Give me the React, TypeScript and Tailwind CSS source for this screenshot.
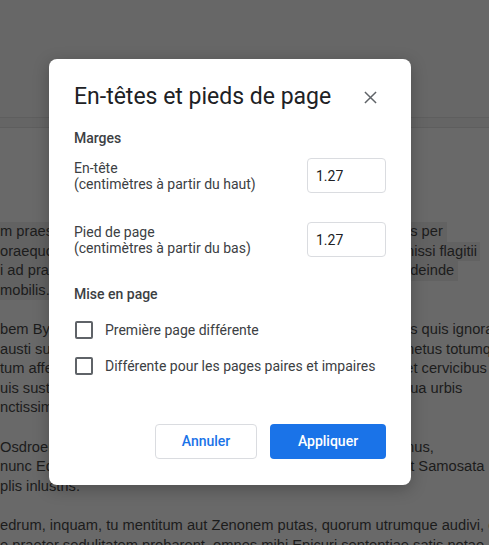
import React from 'react';

interface DocLine {
  left: string;
  right: string;
  hl?: string;
}

const lines: DocLine[] = [
  { left: 'm praesentium nostri temporis', right: 'es per', hl: 'w-[447px]' },
  { left: 'oraequo animo videntur', right: 'missi flagitii', hl: 'w-[480px]' },
  { left: 'i ad praetorium venire', right: 'adeinde', hl: 'w-[458px]' },
  { left: 'mobilis.', right: '', hl: 'w-[50px]' },
  { left: '', right: '' },
  { left: 'bem Byzantium contendit', right: 'ris quis ignorat' },
  { left: 'austi suri temporis', right: 'metus totumque' },
  { left: 'tum affectus animo', right: 'iet cervicibus' },
  { left: 'uis sustinere potuit', right: 'qua urbis' },
  { left: 'nctissimae urbis', right: '' },
  { left: '', right: '' },
  { left: ' Osdroenae regionis', right: 'mus,' },
  { left: ' nunc Edessam', right: 'et Samosata' },
  { left: 'plis inlustris.', right: '' },
  { left: '', right: '' },
  { left: 'edrum, inquam, tu mentitum aut Zenonem putas, quorum utrumque audivi, cum', right: '' },
  { left: 'e praeter sedulitatem probarent, omnes mihi Epicuri sententiae satis notae', right: '' },
];

const Checkbox = ({ label }: { label: string }) => (
  <label className="flex h-6 items-center">
    <span className="ml-[1px] h-[18px] w-[18px] rounded-[2px] border-2 border-[#5f6368]" />
    <span className="ml-3 text-[14px] text-[#3c4043]">{label}</span>
  </label>
);

const MarginField = ({ title, hint }: { title: string; hint: string }) => (
  <div className="flex h-[35px] items-center justify-between">
    <div className="text-[14px] leading-4 text-[#3c4043]">
      <div>{title}</div>
      <div>{hint}</div>
    </div>
    <input
      defaultValue="1.27"
      className="h-[35px] w-[79px] rounded border border-[#dadce0] px-[8px] text-[14px] text-[#202124] outline-none"
    />
  </div>
);

export default function App() {
  return (
    <div className="relative h-[545px] w-[489px] overflow-hidden bg-[#696969] font-['Roboto',sans-serif]">
      <div className="h-[117px] bg-[#676767]" />
      <div className="h-[11px] border-y border-[#5e5e5e] bg-[#656565]" />
      <div className="pt-[94px] font-['Liberation_Sans',Arial,sans-serif] text-[14.7px] leading-[19.6px] text-[#1c1c1c]">
        {lines.map((line, i) => (
          <div key={i} className={`flex h-[19.6px] whitespace-nowrap ${line.hl ? line.hl + ' bg-[#626262]' : ''}`}>
            {line.right ? (
              <>
                <div className="w-[402px] shrink-0 overflow-hidden">{line.left}</div>
                <div>{line.right}</div>
              </>
            ) : (
              <div>{line.left}</div>
            )}
          </div>
        ))}
      </div>

      <div className="absolute left-[49px] top-[59px] flex h-[426px] w-[362px] flex-col rounded-lg bg-white px-[25px] pt-[24px] shadow-[0_4px_16px_rgba(0,0,0,0.25)]">
        <div className="flex h-7 items-center justify-between">
          <h2 className="text-[23px] leading-7 text-[#202124]">En-têtes et pieds de page</h2>
          <svg viewBox="0 0 14 14" className="mr-[9px] h-[13px] w-[13px] text-[#5f6368]" fill="none" stroke="currentColor" strokeWidth="1.6">
            <path d="M1 1l12 12M13 1L1 13" />
          </svg>
        </div>

        <div className="mt-[17px] text-[14px] font-medium leading-5 text-[#3c4043]">Marges</div>
        <div className="mt-[10px]">
          <MarginField title="En-tête" hint="(centimètres à partir du haut)" />
        </div>
        <div className="mt-[29px]">
          <MarginField title="Pied de page" hint="(centimètres à partir du bas)" />
        </div>

        <div className="mt-[27px] text-[14px] font-medium leading-5 text-[#3c4043]">Mise en page</div>
        <div className="mt-[14px] flex flex-col gap-3">
          <Checkbox label="Première page différente" />
          <Checkbox label="Différente pour les pages paires et impaires" />
        </div>

        <div className="mt-auto mb-[26px] flex justify-end gap-[13px]">
          <button className="h-[35px] w-[102px] rounded border border-[#dadce0] text-[14px] font-medium text-[#1a73e8]">
            Annuler
          </button>
          <button className="h-[35px] w-[116px] rounded bg-[#1a73e8] text-[14px] font-medium text-white">
            Appliquer
          </button>
        </div>
      </div>
    </div>
  );
}
